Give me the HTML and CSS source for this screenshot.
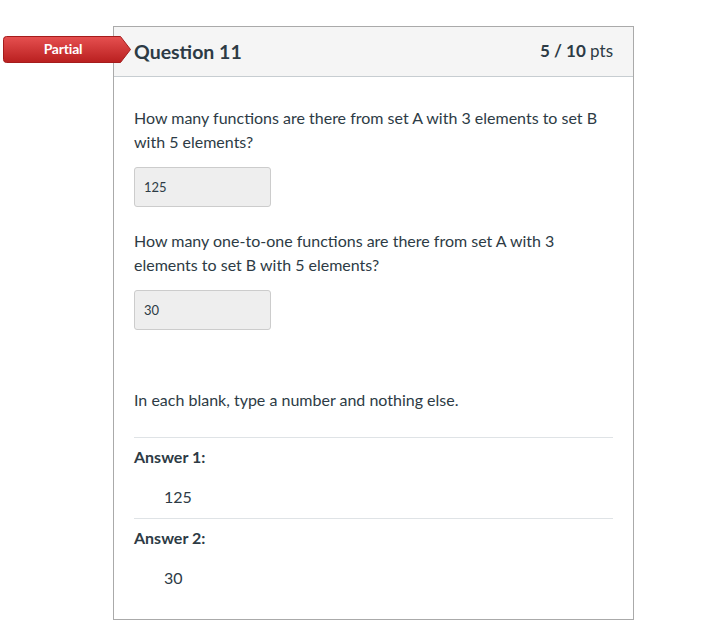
FILE: index.html
```html
<!DOCTYPE html>
<html>
<head>
<meta charset="utf-8">
<link rel="stylesheet" href="styles.css">
</head>
<body>
<div class="page">
  <div class="badge">
    <svg class="badge-shape" width="128" height="27" viewBox="0 0 128 27">
      <defs>
        <linearGradient id="rg" x1="0" y1="0" x2="0" y2="1">
          <stop offset="0" stop-color="#e65050"/>
          <stop offset="1" stop-color="#b91f1f"/>
        </linearGradient>
      </defs>
      <path d="M3.5 0.5 H117.5 L127.5 13.5 L117.5 26.5 H3.5 Q0.5 26.5 0.5 23.5 V3.5 Q0.5 0.5 3.5 0.5 Z" fill="url(#rg)" stroke="#a51c1c" stroke-width="1"/>
    </svg>
    <span class="badge-text">Partial</span>
  </div>
  <div class="card">
    <div class="card-header">
      <h2 class="q-title">Question 11</h2>
      <div class="pts"><b>5 / 10</b> pts</div>
    </div>
    <div class="card-body">
      <p class="q-text">How many functions are there from set A with 3 elements to set B with 5 elements?</p>
      <div class="input-box">125</div>
      <p class="q-text second">How many one-to-one functions are there from set A with 3 elements to set B with 5 elements?</p>
      <div class="input-box">30</div>
      <p class="q-text hint">In each blank, type a number and nothing else.</p>
      <div class="answer">
        <div class="answer-label">Answer 1:</div>
        <div class="answer-value">125</div>
      </div>
      <div class="answer">
        <div class="answer-label">Answer 2:</div>
        <div class="answer-value">30</div>
      </div>
    </div>
  </div>
</div>
</body>
</html>
```
FILE: styles.css
```css
html, body {
  margin: 0;
  padding: 0;
  background: #ffffff;
}
body {
  font-family: Lato, "Open Sans", sans-serif;
  color: #2d3b45;
}
.page {
  position: relative;
  padding: 26px 0 0 113px;
}
.badge {
  position: absolute;
  left: 3px;
  top: 36px;
  width: 128px;
  height: 27px;
}
.badge-shape {
  position: absolute;
  left: 0;
  top: 0;
  display: block;
}
.badge-text {
  position: absolute;
  left: 0;
  width: 120px;
  top: 0;
  line-height: 25px;
  text-align: center;
  color: #ffffff;
  font-weight: 700;
  font-size: 14px;
  letter-spacing: -0.2px;
}
.card {
  width: 519px;
  border: 1px solid #aaaaaa;
  box-sizing: content-box;
}
.card-header {
  display: flex;
  justify-content: space-between;
  align-items: center;
  height: 49px;
  background: #f5f5f5;
  border-bottom: 1px solid #c7cdd1;
  padding: 0 20px;
}
.q-title {
  margin: 0;
  font-size: 19.5px;
  font-weight: 700;
  line-height: 24px;
  padding-top: 1px;
}
.pts {
  font-size: 17px;
  font-weight: 400;
  padding-bottom: 3px;
}
.pts b {
  font-weight: 700;
}
.card-body {
  padding: 29px 20px 20px 20px;
}
.q-text {
  margin: 0;
  font-size: 16px;
  line-height: 24px;
}
.q-text.second {
  margin-top: 22px;
}
.q-text.hint {
  margin-top: 58px;
  padding-bottom: 25px;
  border-bottom: 1px solid #dfe3e6;
}
.input-box {
  margin-top: 13px;
  width: 117px;
  height: 38px;
  background: #eeeeee;
  border: 1px solid #cccccc;
  border-radius: 3px;
  padding: 0 9px;
  font-size: 13px;
  line-height: 38px;
}
.answer {
  padding-top: 7px;
}
.answer + .answer {
  border-top: 1px solid #dfe3e6;
}
.answer-label {
  font-size: 16px;
  font-weight: 700;
  line-height: 24px;
}
.answer-value {
  font-size: 16px;
  line-height: 24px;
  padding: 16px 0 9px 30px;
}
```
